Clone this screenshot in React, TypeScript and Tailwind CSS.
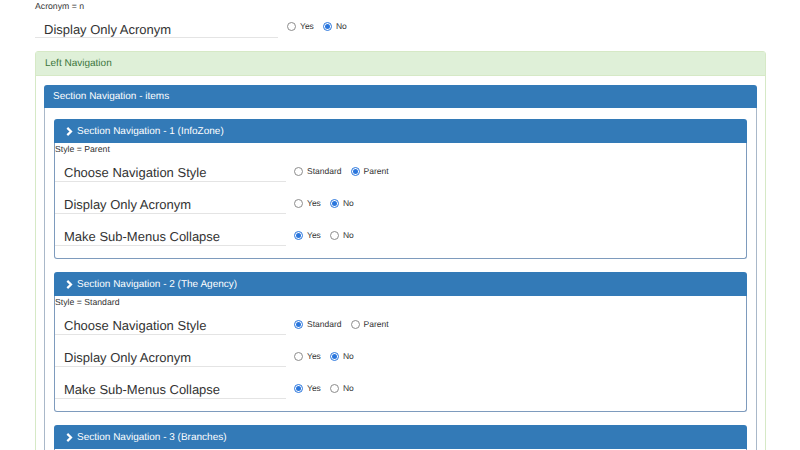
import React from "react";

type Opt = { label: string; checked: boolean };

function Radio({ checked }: { checked: boolean }) {
  if (checked) {
    return (
      <span className="flex h-[9px] w-[9px] items-center justify-center rounded-full border border-[#2a76dd] bg-white">
        <span className="h-[5px] w-[5px] rounded-full bg-[#2a76dd]" />
      </span>
    );
  }
  return <span className="block h-[9px] w-[9px] rounded-full border border-[#8c8c8c] bg-white" />;
}

function Options({ opts }: { opts: Opt[] }) {
  return (
    <div className="flex items-center gap-[9px]">
      {opts.map((o) => (
        <label key={o.label} className="flex items-center gap-[4px] text-[8.5px] leading-[10px] text-[#333]">
          <Radio checked={o.checked} />
          <span>{o.label}</span>
        </label>
      ))}
    </div>
  );
}

function Chevron() {
  return (
    <svg width="7" height="9" viewBox="0 0 7 9" className="shrink-0">
      <polyline points="1.3,0.9 5,4.5 1.3,8.1" fill="none" stroke="#ffffff" strokeWidth="2.2" strokeLinejoin="miter" />
    </svg>
  );
}

type RowDef = { label: string; opts: Opt[] };

function SectionRow({ row }: { row: RowDef }) {
  return (
    <div className="flex h-[27px]">
      <div className="flex h-[27px] w-[231px] items-end border-b border-[#e4e4e4] pb-[1px] pl-[9px]">
        <span className="text-[13px] leading-[15px] text-[#333]">{row.label}</span>
      </div>
      <div className="pl-[8px] pt-[11px]">
        <Options opts={row.opts} />
      </div>
    </div>
  );
}

function Section({ title, style, rows }: { title: string; style: string; rows: RowDef[] }) {
  return (
    <div>
      <div className="flex h-[24px] items-center gap-[4px] rounded-t-[3px] bg-[#337ab7] pl-[12px] text-[10px] text-white">
        <Chevron />
        <span>{title}</span>
      </div>
      <div className="rounded-b-[3px] border border-t-0 border-[#7e9bbd] pb-[12px]">
        <div className="h-[12px] text-[8.7px] leading-[12px] text-[#333]">{style}</div>
        <div className="flex flex-col gap-[5px]">
          {rows.map((r) => (
            <SectionRow key={r.label} row={r} />
          ))}
        </div>
      </div>
    </div>
  );
}

const yn = (yes: boolean): Opt[] => [
  { label: "Yes", checked: yes },
  { label: "No", checked: !yes },
];

const sp = (standard: boolean): Opt[] => [
  { label: "Standard", checked: standard },
  { label: "Parent", checked: !standard },
];

export default function App() {
  const sections = [
    {
      title: "Section Navigation - 1 (InfoZone)",
      style: "Style = Parent",
      rows: [
        { label: "Choose Navigation Style", opts: sp(false) },
        { label: "Display Only Acronym", opts: yn(false) },
        { label: "Make Sub-Menus Collapse", opts: yn(true) },
      ],
    },
    {
      title: "Section Navigation - 2 (The Agency)",
      style: "Style = Standard",
      rows: [
        { label: "Choose Navigation Style", opts: sp(true) },
        { label: "Display Only Acronym", opts: yn(false) },
        { label: "Make Sub-Menus Collapse", opts: yn(true) },
      ],
    },
    {
      title: "Section Navigation - 3 (Branches)",
      style: "Style = Standard",
      rows: [
        { label: "Choose Navigation Style", opts: sp(true) },
        { label: "Display Only Acronym", opts: yn(false) },
        { label: "Make Sub-Menus Collapse", opts: yn(true) },
      ],
    },
  ];

  return (
    <div className="min-h-[450px] bg-white font-['Liberation_Sans',Arial,sans-serif] text-[#333] [text-rendering:geometricPrecision]">
      <div className="ml-[35px] w-[731px]">
        <div className="h-[12px] text-[8.7px] leading-[12px]">Acronym = n</div>
        <div className="flex h-[26px]">
          <div className="flex h-[26px] w-[243px] items-end border-b border-[#e4e4e4] pl-[9px]">
            <span className="text-[13px] leading-[15px]">Display Only Acronym</span>
          </div>
          <div className="pl-[9px] pt-[9px]">
            <Options opts={yn(false)} />
          </div>
        </div>

        <div className="mt-[13px] rounded-[3px] border border-[#d6e9c6]">
          <div className="flex h-[24px] items-center border-b border-[#d6e9c6] bg-[#dff0d8] pl-[9px] text-[10px] text-[#3c763d]">
            Left Navigation
          </div>
          <div className="px-[8px] pt-[9px] pb-[10px]">
            <div>
              <div className="flex h-[23px] items-center rounded-t-[3px] bg-[#337ab7] pl-[9px] text-[10px] text-white">
                Section Navigation - items
              </div>
              <div className="flex flex-col gap-[13px] rounded-b-[3px] border border-t-0 border-[#a9b8c9] px-[9px] pt-[11px] pb-[10px]">
                {sections.map((s) => (
                  <Section key={s.title} title={s.title} style={s.style} rows={s.rows} />
                ))}
              </div>
            </div>
          </div>
        </div>
      </div>
    </div>
  );
}
